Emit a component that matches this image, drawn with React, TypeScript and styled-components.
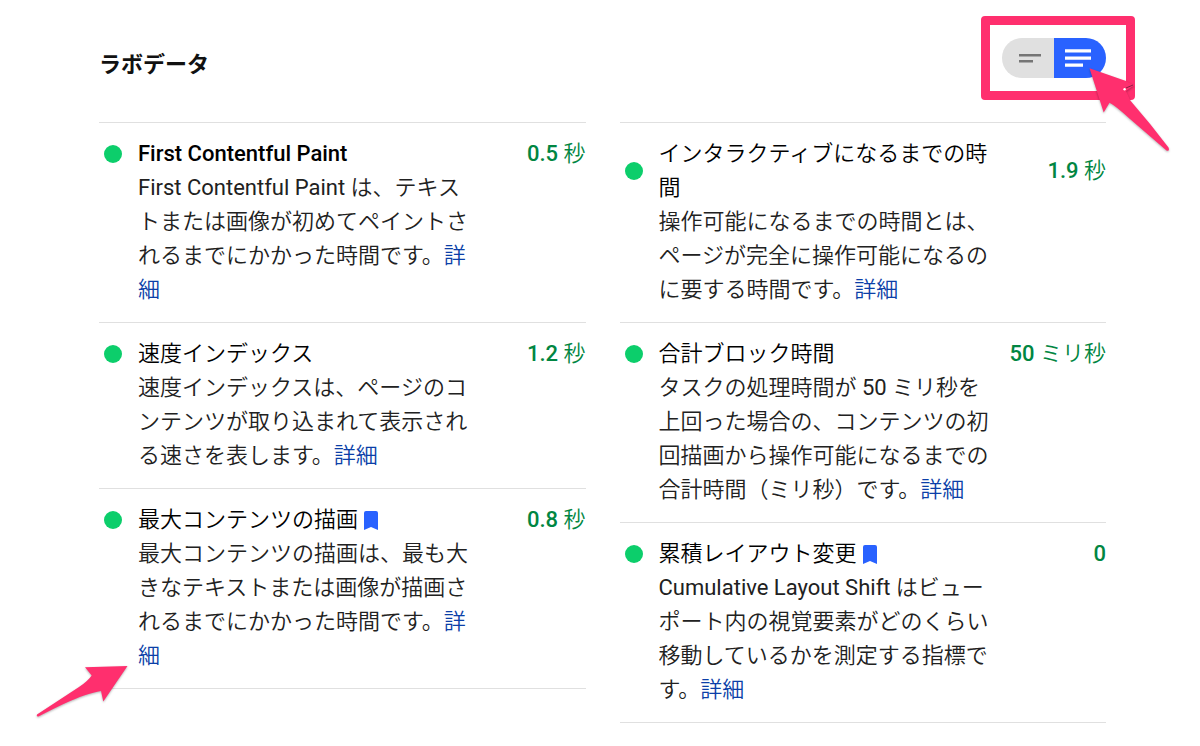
import React, { useState } from "react";
import styled, { createGlobalStyle } from "styled-components";

const GlobalStyle = createGlobalStyle`
  *, *::before, *::after { box-sizing: border-box; }
  body {
    margin: 0;
    background: #fff;
    color: #212121;
    font-family: Roboto, "Noto Sans CJK JP", sans-serif;
    font-size: 22px;
    line-height: 34px;
  }
`;

const Page = styled.main`
  padding: 38px 94px 24px 99px;
`;

const Header = styled.header`
  display: flex;
  justify-content: space-between;
  align-items: flex-start;
  height: 84px;
`;

const Heading = styled.h1`
  margin: 0;
  padding-top: 10px;
  color: #111;
  font-size: 22px;
  font-weight: 700;
  line-height: 34px;
`;

const ToggleArea = styled.div`
  position: relative;
`;

const Toggle = styled.div`
  display: flex;
  overflow: hidden;
  height: 40px;
  border-radius: 20px;
`;

const ToggleButton = styled.button<{ $active: boolean }>`
  display: flex;
  align-items: center;
  justify-content: center;
  width: 52px;
  padding: 0;
  border: 0;
  cursor: pointer;
  color: ${(p) => (p.$active ? "#fff" : "#757575")};
  background: ${(p) => (p.$active ? "#2962ff" : "#e0e0e0")};
`;

const Highlight = styled.div`
  position: absolute;
  inset: -22px -29px -22px -21px;
  border: 9px solid #ff2f6e;
  border-radius: 4px;
  pointer-events: none;
`;

const ToggleArrow = styled.svg`
  position: absolute;
  left: 80px;
  top: 22px;
  pointer-events: none;
  filter: drop-shadow(0 1px 1px rgba(0, 0, 0, 0.3));
`;

const NoteArrow = styled.svg`
  position: absolute;
  left: -69px;
  bottom: -36px;
  pointer-events: none;
  filter: drop-shadow(0 1px 1px rgba(0, 0, 0, 0.3));
`;

const Columns = styled.div`
  display: grid;
  grid-template-columns: 1fr 1fr;
  column-gap: 34px;
  align-items: start;
`;

const Column = styled.div`
  border-bottom: 1px solid #e0e0e0;
`;

const Metric = styled.section`
  position: relative;
  display: grid;
  grid-template-columns: 39px 1fr 110px;
  align-items: center;
  padding: 14px 0 15px;
  border-top: 1px solid #e0e0e0;
`;

const Dot = styled.span`
  width: 18px;
  height: 18px;
  margin-left: 5px;
  border-radius: 50%;
  background: #0cce6b;
`;

const Title = styled.h2<{ $latin?: boolean }>`
  margin: 0;
  color: #000;
  font-size: 22px;
  font-weight: ${(p) => (p.$latin ? 500 : 350)};
  line-height: 34px;
`;

const Value = styled.div`
  color: #018642;
  font-weight: 500;
  text-align: right;
  white-space: nowrap;
`;

const Unit = styled.span`
  font-weight: 350;
`;

const Description = styled.p`
  grid-column: 2;
  margin: 0;
  font-weight: 350;
`;

const Latin = styled.span`
  font-weight: 400;
`;

const Link = styled.a`
  color: #0b3fa8;
  text-decoration: none;
`;

const Bookmark = styled.svg`
  margin-left: 6px;
  vertical-align: -3px;
`;

type MetricData = {
  title: string;
  latin?: boolean;
  value: string;
  unit?: string;
  text: React.ReactNode;
  marked?: boolean;
  arrow?: boolean;
};

const columns: MetricData[][] = [
  [
    {
      title: "First Contentful Paint",
      latin: true,
      value: "0.5",
      unit: "秒",
      text: (
        <>
          <Latin>First Contentful Paint</Latin> は、テキストまたは画像が初めてペイントされるまでにかかった時間です。
        </>
      ),
    },
    {
      title: "速度インデックス",
      value: "1.2",
      unit: "秒",
      text: "速度インデックスは、ページのコンテンツが取り込まれて表示される速さを表します。",
    },
    {
      title: "最大コンテンツの描画",
      value: "0.8",
      unit: "秒",
      text: "最大コンテンツの描画は、最も大きなテキストまたは画像が描画されるまでにかかった時間です。",
      marked: true,
      arrow: true,
    },
  ],
  [
    {
      title: "インタラクティブになるまでの時間",
      value: "1.9",
      unit: "秒",
      text: "操作可能になるまでの時間とは、ページが完全に操作可能になるのに要する時間です。",
    },
    {
      title: "合計ブロック時間",
      value: "50",
      unit: "ミリ秒",
      text: (
        <>
          タスクの処理時間が <Latin>50</Latin> ミリ秒を上回った場合の、コンテンツの初回描画から操作可能になるまでの合計時間（ミリ秒）です。
        </>
      ),
    },
    {
      title: "累積レイアウト変更",
      value: "0",
      text: (
        <>
          <Latin>Cumulative Layout Shift</Latin> はビューポート内の視覚要素がどのくらい移動しているかを測定する指標です。
        </>
      ),
      marked: true,
    },
  ],
];

function MetricRow({ item }: { item: MetricData }) {
  return (
    <Metric>
      <Dot />
      <Title $latin={item.latin}>
        {item.title}
        {item.marked && (
          <Bookmark width="14" height="19" viewBox="0 0 14 19" aria-hidden="true">
            <path d="M0 19V2Q0 0 2 0H12Q14 0 14 2V19L7 16Z" fill="#2962ff" />
          </Bookmark>
        )}
      </Title>
      <Value>
        {item.value}
        {item.unit && <Unit> {item.unit}</Unit>}
      </Value>
      <Description>
        {item.text}
        <Link href="#details">詳細</Link>
      </Description>
      {item.arrow && (
        <NoteArrow width="106" height="64" viewBox="30 660 106 64" aria-hidden="true">
          <path
            d="M127.5 666L85 667.3L91.7 675.5Q88 681 79 687L37 714.5Q36 717 38.5 716.5Q68 701 84 695.5Q94 692 101 691L103.3 701.5Z"
            fill="#ff2f6e"
          />
        </NoteArrow>
      )}
    </Metric>
  );
}

export default function App() {
  const [expanded, setExpanded] = useState(true);
  return (
    <>
      <GlobalStyle />
      <Page>
        <Header>
          <Heading>ラボデータ</Heading>
          <ToggleArea>
            <Toggle>
              <ToggleButton
                type="button"
                aria-label="簡易表示"
                aria-pressed={!expanded}
                $active={!expanded}
                onClick={() => setExpanded(false)}
              >
                <svg width="26" height="20" viewBox="0 0 26 20" fill="currentColor">
                  <path d="M4 6H26V8.5H4ZM4 12H18V14.5H4Z" />
                </svg>
              </ToggleButton>
              <ToggleButton
                type="button"
                aria-label="詳細表示"
                aria-pressed={expanded}
                $active={expanded}
                onClick={() => setExpanded(true)}
              >
                <svg width="30" height="20" viewBox="0 0 30 20" fill="currentColor">
                  <path d="M0 1.2H26V4.4H0ZM0 8.5H26V11.7H0ZM0 15.5H18V18.7H0Z" />
                </svg>
              </ToggleButton>
            </Toggle>
            <Highlight />
            <ToggleArrow width="94" height="96" viewBox="1082 60 94 96" aria-hidden="true">
              <path
                d="M1089.5 68.3L1126 81L1134 85.5L1126 91L1130.5 100.7Q1150 123 1168.5 147.5Q1170 151.5 1166.5 150.5L1130 119Q1116 106 1109.5 102.7L1103.7 112.5Z"
                fill="#ff2f6e"
              />
              <path d="M1126 88L1133 85" stroke="#8c1f45" strokeWidth="1" />
              <circle cx="1124.6" cy="89.3" r="1.2" fill="#fff" />
            </ToggleArrow>
          </ToggleArea>
        </Header>
        <Columns>
          {columns.map((items, i) => (
            <Column key={i}>
              {items.map((item) => (
                <MetricRow key={item.title} item={item} />
              ))}
            </Column>
          ))}
        </Columns>
      </Page>
    </>
  );
}
